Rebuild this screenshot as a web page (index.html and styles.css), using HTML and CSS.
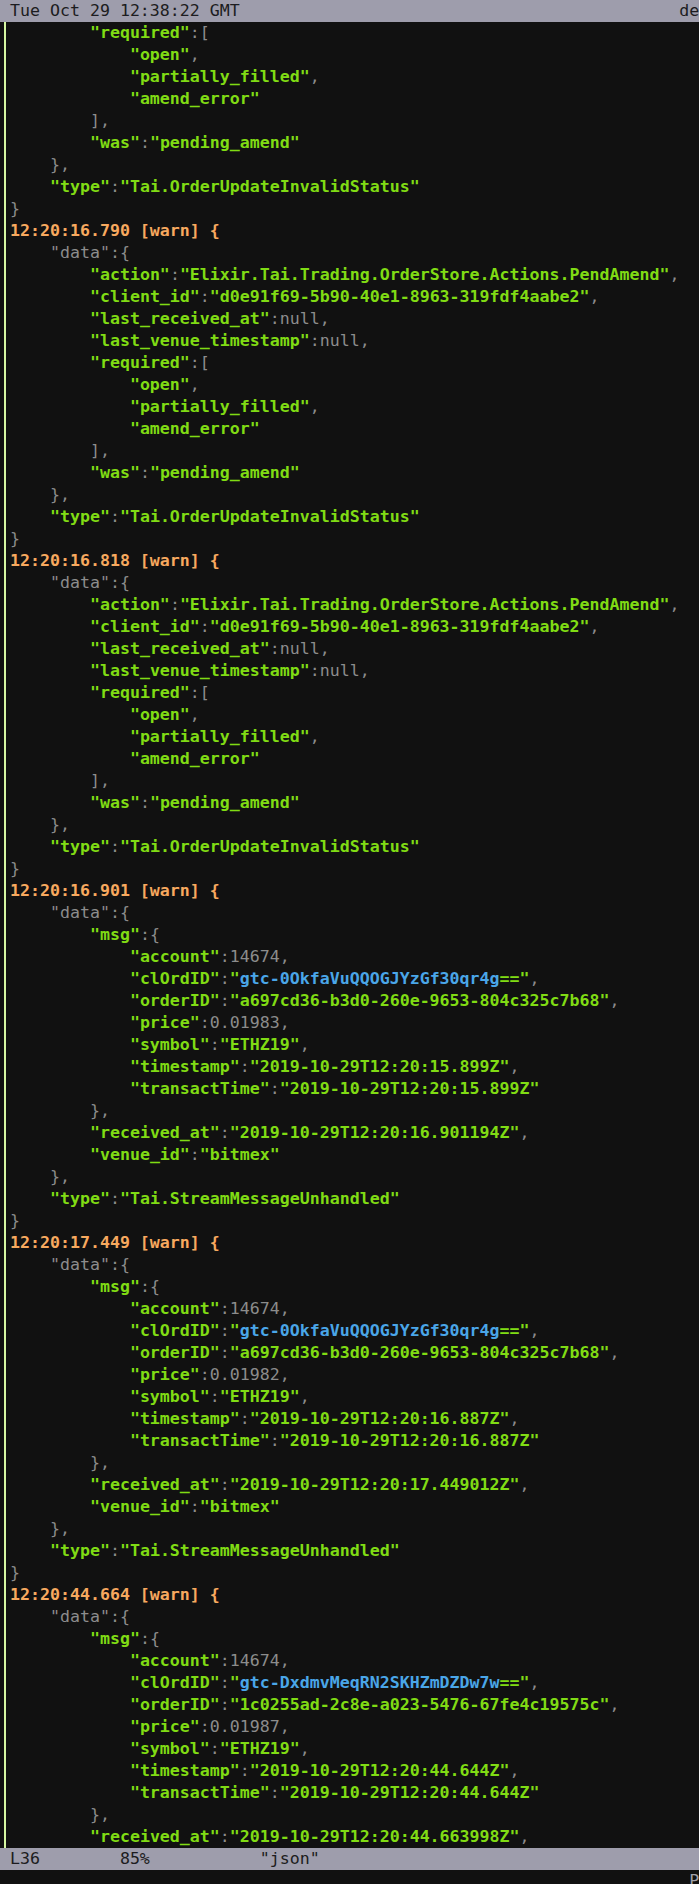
FILE: index.html
```html
<!DOCTYPE html>
<html>
<head>
<meta charset="utf-8">
<link rel="stylesheet" href="styles.css">
</head>
<body>
<div class="topbar">Tue Oct 29 12:38:22 GMT                                            de</div>
<div class="buffer">
<div class="l">        <span class="g">"required"</span><span class="p">:[</span></div>
<div class="l">            <span class="g">"open"</span><span class="p">,</span></div>
<div class="l">            <span class="g">"partially_filled"</span><span class="p">,</span></div>
<div class="l">            <span class="g">"amend_error"</span></div>
<div class="l">        <span class="p">],</span></div>
<div class="l">        <span class="g">"was"</span><span class="p">:</span><span class="g">"pending_amend"</span></div>
<div class="l">    <span class="p">},</span></div>
<div class="l">    <span class="g">"type"</span><span class="p">:</span><span class="g">"Tai.OrderUpdateInvalidStatus"</span></div>
<div class="l"><span class="p">}</span></div>
<div class="l"><span class="o">12:20:16.790 [warn] {</span></div>
<div class="l">    <span class="p">"data":{</span></div>
<div class="l">        <span class="g">"action"</span><span class="p">:</span><span class="g">"Elixir.Tai.Trading.OrderStore.Actions.PendAmend"</span><span class="p">,</span></div>
<div class="l">        <span class="g">"client_id"</span><span class="p">:</span><span class="g">"d0e91f69-5b90-40e1-8963-319fdf4aabe2"</span><span class="p">,</span></div>
<div class="l">        <span class="g">"last_received_at"</span><span class="p">:null,</span></div>
<div class="l">        <span class="g">"last_venue_timestamp"</span><span class="p">:null,</span></div>
<div class="l">        <span class="g">"required"</span><span class="p">:[</span></div>
<div class="l">            <span class="g">"open"</span><span class="p">,</span></div>
<div class="l">            <span class="g">"partially_filled"</span><span class="p">,</span></div>
<div class="l">            <span class="g">"amend_error"</span></div>
<div class="l">        <span class="p">],</span></div>
<div class="l">        <span class="g">"was"</span><span class="p">:</span><span class="g">"pending_amend"</span></div>
<div class="l">    <span class="p">},</span></div>
<div class="l">    <span class="g">"type"</span><span class="p">:</span><span class="g">"Tai.OrderUpdateInvalidStatus"</span></div>
<div class="l"><span class="p">}</span></div>
<div class="l"><span class="o">12:20:16.818 [warn] {</span></div>
<div class="l">    <span class="p">"data":{</span></div>
<div class="l">        <span class="g">"action"</span><span class="p">:</span><span class="g">"Elixir.Tai.Trading.OrderStore.Actions.PendAmend"</span><span class="p">,</span></div>
<div class="l">        <span class="g">"client_id"</span><span class="p">:</span><span class="g">"d0e91f69-5b90-40e1-8963-319fdf4aabe2"</span><span class="p">,</span></div>
<div class="l">        <span class="g">"last_received_at"</span><span class="p">:null,</span></div>
<div class="l">        <span class="g">"last_venue_timestamp"</span><span class="p">:null,</span></div>
<div class="l">        <span class="g">"required"</span><span class="p">:[</span></div>
<div class="l">            <span class="g">"open"</span><span class="p">,</span></div>
<div class="l">            <span class="g">"partially_filled"</span><span class="p">,</span></div>
<div class="l">            <span class="g">"amend_error"</span></div>
<div class="l">        <span class="p">],</span></div>
<div class="l">        <span class="g">"was"</span><span class="p">:</span><span class="g">"pending_amend"</span></div>
<div class="l">    <span class="p">},</span></div>
<div class="l">    <span class="g">"type"</span><span class="p">:</span><span class="g">"Tai.OrderUpdateInvalidStatus"</span></div>
<div class="l"><span class="p">}</span></div>
<div class="l"><span class="o">12:20:16.901 [warn] {</span></div>
<div class="l">    <span class="p">"data":{</span></div>
<div class="l">        <span class="g">"msg"</span><span class="p">:{</span></div>
<div class="l">            <span class="g">"account"</span><span class="p">:14674,</span></div>
<div class="l">            <span class="g">"clOrdID"</span><span class="p">:</span><span class="g">"</span><span class="b">gtc-0OkfaVuQQOGJYzGf30qr4g</span><span class="g">=="</span><span class="p">,</span></div>
<div class="l">            <span class="g">"orderID"</span><span class="p">:</span><span class="g">"a697cd36-b3d0-260e-9653-804c325c7b68"</span><span class="p">,</span></div>
<div class="l">            <span class="g">"price"</span><span class="p">:0.01983,</span></div>
<div class="l">            <span class="g">"symbol"</span><span class="p">:</span><span class="g">"ETHZ19"</span><span class="p">,</span></div>
<div class="l">            <span class="g">"timestamp"</span><span class="p">:</span><span class="g">"2019-10-29T12:20:15.899Z"</span><span class="p">,</span></div>
<div class="l">            <span class="g">"transactTime"</span><span class="p">:</span><span class="g">"2019-10-29T12:20:15.899Z"</span></div>
<div class="l">        <span class="p">},</span></div>
<div class="l">        <span class="g">"received_at"</span><span class="p">:</span><span class="g">"2019-10-29T12:20:16.901194Z"</span><span class="p">,</span></div>
<div class="l">        <span class="g">"venue_id"</span><span class="p">:</span><span class="g">"bitmex"</span></div>
<div class="l">    <span class="p">},</span></div>
<div class="l">    <span class="g">"type"</span><span class="p">:</span><span class="g">"Tai.StreamMessageUnhandled"</span></div>
<div class="l"><span class="p">}</span></div>
<div class="l"><span class="o">12:20:17.449 [warn] {</span></div>
<div class="l">    <span class="p">"data":{</span></div>
<div class="l">        <span class="g">"msg"</span><span class="p">:{</span></div>
<div class="l">            <span class="g">"account"</span><span class="p">:14674,</span></div>
<div class="l">            <span class="g">"clOrdID"</span><span class="p">:</span><span class="g">"</span><span class="b">gtc-0OkfaVuQQOGJYzGf30qr4g</span><span class="g">=="</span><span class="p">,</span></div>
<div class="l">            <span class="g">"orderID"</span><span class="p">:</span><span class="g">"a697cd36-b3d0-260e-9653-804c325c7b68"</span><span class="p">,</span></div>
<div class="l">            <span class="g">"price"</span><span class="p">:0.01982,</span></div>
<div class="l">            <span class="g">"symbol"</span><span class="p">:</span><span class="g">"ETHZ19"</span><span class="p">,</span></div>
<div class="l">            <span class="g">"timestamp"</span><span class="p">:</span><span class="g">"2019-10-29T12:20:16.887Z"</span><span class="p">,</span></div>
<div class="l">            <span class="g">"transactTime"</span><span class="p">:</span><span class="g">"2019-10-29T12:20:16.887Z"</span></div>
<div class="l">        <span class="p">},</span></div>
<div class="l">        <span class="g">"received_at"</span><span class="p">:</span><span class="g">"2019-10-29T12:20:17.449012Z"</span><span class="p">,</span></div>
<div class="l">        <span class="g">"venue_id"</span><span class="p">:</span><span class="g">"bitmex"</span></div>
<div class="l">    <span class="p">},</span></div>
<div class="l">    <span class="g">"type"</span><span class="p">:</span><span class="g">"Tai.StreamMessageUnhandled"</span></div>
<div class="l"><span class="p">}</span></div>
<div class="l"><span class="o">12:20:44.664 [warn] {</span></div>
<div class="l">    <span class="p">"data":{</span></div>
<div class="l">        <span class="g">"msg"</span><span class="p">:{</span></div>
<div class="l">            <span class="g">"account"</span><span class="p">:14674,</span></div>
<div class="l">            <span class="g">"clOrdID"</span><span class="p">:</span><span class="g">"</span><span class="b">gtc-DxdmvMeqRN2SKHZmDZDw7w</span><span class="g">=="</span><span class="p">,</span></div>
<div class="l">            <span class="g">"orderID"</span><span class="p">:</span><span class="g">"1c0255ad-2c8e-a023-5476-67fe4c19575c"</span><span class="p">,</span></div>
<div class="l">            <span class="g">"price"</span><span class="p">:0.01987,</span></div>
<div class="l">            <span class="g">"symbol"</span><span class="p">:</span><span class="g">"ETHZ19"</span><span class="p">,</span></div>
<div class="l">            <span class="g">"timestamp"</span><span class="p">:</span><span class="g">"2019-10-29T12:20:44.644Z"</span><span class="p">,</span></div>
<div class="l">            <span class="g">"transactTime"</span><span class="p">:</span><span class="g">"2019-10-29T12:20:44.644Z"</span></div>
<div class="l">        <span class="p">},</span></div>
<div class="l">        <span class="g">"received_at"</span><span class="p">:</span><span class="g">"2019-10-29T12:20:44.663998Z"</span><span class="p">,</span></div>
</div>
<div class="statusbar">L36        85%           "json"</div>
<div class="cmdline">                                                                    P</div>
</body>
</html>
```

FILE: styles.css
```css
html, body {
  margin: 0;
  padding: 0;
  background: #111111;
}
body {
  width: 699px;
  height: 1884px;
  overflow: hidden;
  font-family: "DejaVu Sans Mono", "Liberation Mono", monospace;
  font-size: 16.6px;
  line-height: 22px;
  color: #8c8c8c;
}
.topbar,
.statusbar,
.cmdline {
  height: 22px;
  padding-left: 10px;
  white-space: pre;
  overflow: hidden;
}
.topbar,
.statusbar {
  background: #9e9dac;
  color: #1c1c20;
}
.cmdline {
  height: 14px;
  color: #a0a0a8;
}
.buffer {
  height: 1826px;
  overflow: hidden;
  margin-left: 4px;
  border-left: 2px solid #d6f7a2;
  padding-left: 4px;
}
.l {
  height: 22px;
  white-space: pre;
}
.p {
  color: #8c8c8c;
}
.g {
  color: #80dc14;
  font-weight: bold;
}
.o {
  color: #f7a95f;
  font-weight: bold;
}
.b {
  color: #4aa6e8;
  font-weight: bold;
}
```
